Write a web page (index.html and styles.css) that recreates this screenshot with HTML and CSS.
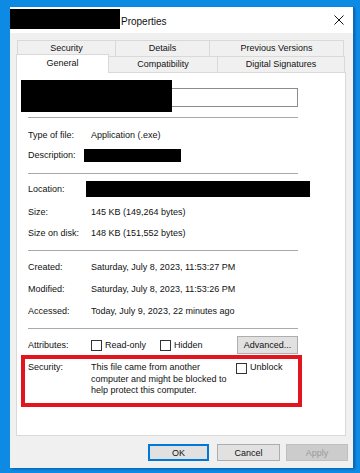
FILE: index.html
```html
<!DOCTYPE html>
<html>
<head>
<meta charset="utf-8">
<link rel="stylesheet" href="styles.css">
</head>
<body>
<div class="window">
  <div class="titlebar">
    <div class="title-redact"></div>
    <span class="title">Properties</span>
    <svg class="close" width="10" height="10" viewBox="0 0 10 10"><path d="M0.5 0.5 L9.5 9.5 M9.5 0.5 L0.5 9.5" stroke="#111" stroke-width="1" fill="none"/></svg>
  </div>
  <div class="content">
    <div class="tabs">
      <div class="tabrow back">
        <div class="tab w-sec">Security</div>
        <div class="tab w-det">Details</div>
        <div class="tab w-prev">Previous Versions</div>
      </div>
      <div class="tabrow front">
        <div class="tab selected w-gen">General</div>
        <div class="tab w-comp">Compatibility</div>
        <div class="tab w-dig">Digital Signatures</div>
      </div>
    </div>
    <div class="panel">
      <div class="icon-row">
        <div class="namebox"></div>
        <div class="icon-redact"></div>
      </div>
      <div class="sep s1"></div>
      <div class="row r-type"><span class="label">Type of file:</span><span class="value">Application (.exe)</span></div>
      <div class="row r-desc"><span class="label">Description:</span><span class="redact desc-redact"></span></div>
      <div class="sep s2"></div>
      <div class="row r-loc"><span class="label">Location:</span><span class="redact loc-redact"></span></div>
      <div class="row r-size"><span class="label">Size:</span><span class="value">145 KB (149,264 bytes)</span></div>
      <div class="row r-disk"><span class="label">Size on disk:</span><span class="value">148 KB (151,552 bytes)</span></div>
      <div class="sep s3"></div>
      <div class="row r-created"><span class="label">Created:</span><span class="value">Saturday, July 8, 2023, 11:53:27 PM</span></div>
      <div class="row r-mod"><span class="label">Modified:</span><span class="value">Saturday, July 8, 2023, 11:53:26 PM</span></div>
      <div class="row r-acc"><span class="label">Accessed:</span><span class="value">Today, July 9, 2023, 22 minutes ago</span></div>
      <div class="sep s4"></div>
      <div class="row r-attr">
        <span class="label">Attributes:</span>
        <span class="check"></span><span class="check-label">Read-only</span>
        <span class="check hidden-box"></span><span class="check-label">Hidden</span>
        <span class="btn advanced">Advanced...</span>
      </div>
      <div class="security-box">
        <span class="label sec-label">Security:</span>
        <span class="sec-text">This file came from another computer and might be blocked to help protect this computer.</span>
        <span class="check unblock-box"></span><span class="check-label unblock-label">Unblock</span>
      </div>
    </div>
    <div class="footer">
      <span class="btn ok">OK</span>
      <span class="btn cancel">Cancel</span>
      <span class="btn apply">Apply</span>
    </div>
  </div>
</div>
</body>
</html>
```
FILE: styles.css
```css
* { box-sizing: border-box; }
html, body { margin: 0; padding: 0; }
body {
  background: #0c8ae4;
  width: 360px;
  height: 473px;
  overflow: hidden;
  font-family: "Liberation Sans", Arial, sans-serif;
  font-size: 9px;
  color: #111;
}
.window {
  margin: 7px 0 0 10px;
  width: 343px;
  height: 461px;
  background: #f0f0f0;
  box-shadow: 1px 0 0 #1565b8, 2px 1px 2px rgba(0,40,100,0.45);
  display: flex;
  flex-direction: column;
}
.titlebar {
  height: 26px;
  background: #fff;
  display: flex;
  align-items: flex-start;
  flex: none;
}
.title-redact {
  width: 110px;
  height: 20px;
  margin-top: 2px;
  background: #000;
}
.title {
  font-size: 10px;
  margin-left: 1px;
  margin-top: 9px;
  line-height: 12px;
  color: #111;
}
.close { margin-left: auto; margin-right: 9px; margin-top: 8px; }
.content {
  padding: 7px 0 0 6px;
  display: flex;
  flex-direction: column;
}
.tabs { width: 329px; }
.tabrow { display: flex; }
.tabrow.back { height: 16px; margin-left: 1px; }
.tabrow.front { height: 16px; }
.tab {
  border: 1px solid #d9d9d9;
  border-right: none;
  background: #f0f0f0;
  text-align: center;
  line-height: 14px;
  white-space: nowrap;
}
.tab:last-child { border-right: 1px solid #d9d9d9; }
.back .tab { border-bottom: none; }
.front .tab { border-bottom: none; }
.w-sec { width: 98px; }
.w-det { width: 94px; }
.w-prev { width: 135px; }
.w-gen { width: 93px; }
.w-comp { width: 108px; }
.w-dig { width: 128px; }
.tab.selected {
  background: #fff;
  height: 19px;
  margin-top: -2px;
  line-height: 16px;
  position: relative;
  z-index: 1;
  border-right: 1px solid #d9d9d9;
}
.tab.selected + .tab { border-left: none; }
.panel {
  width: 330px;
  height: 364px;
  background: #fff;
  border: 1px solid #d9d9d9;
  padding: 0 47px 0 11px;
  display: flex;
  flex-direction: column;
}
.icon-row {
  margin-top: 7px;
  margin-left: -7px;
  height: 32px;
  display: flex;
  flex: none;
}
.icon-redact {
  order: 0;
  width: 152px;
  height: 32px;
  background: #000;
}
.namebox {
  order: 1;
  width: 126px;
  height: 19px;
  margin-top: 8px;
  border: 1px solid #8c8c8c;
  border-left: none;
}
.sep { height: 1px; background: #a9a9a9; flex: none; }
.s1 { margin-top: 5px; }
.s2 { margin-top: 8px; }
.s3 { margin-top: 7px; }
.s4 { margin-top: 7px; }
.row {
  height: 20px;
  display: flex;
  align-items: center;
  flex: none;
  white-space: nowrap;
}
.label { width: 63px; flex: none; }
.r-type { margin-top: 7px; }
.r-loc { margin-top: 5px; }
.r-size { margin-top: 3px; }
.r-disk { margin-top: 1px; }
.r-created { margin-top: 6px; }
.r-mod, .r-acc { margin-top: 2px; }
.r-attr { margin-top: 6px; }
.redact { background: #000; display: block; flex: none; }
.desc-redact { width: 97px; height: 13px; margin-left: -7px; }
.loc-redact { width: 224px; height: 16px; margin-left: -5px; }
.check {
  width: 11px;
  height: 11px;
  border: 1px solid #333;
  background: #fff;
  flex: none;
}
.check-label { margin-left: 3px; }
.hidden-box { margin-left: 14px; }
.btn {
  display: flex;
  align-items: center;
  justify-content: center;
  background: #e1e1e1;
  border: 1px solid #adadad;
  flex: none;
}
.advanced { margin-left: auto; width: 61px; height: 18px; }
.security-box {
  margin: 0 -4px 0 -7px;
  height: 52px;
  border: 4px solid #e3141e;
  padding: 3px 0 0 3px;
  display: flex;
  align-items: flex-start;
  line-height: 11.5px;
  flex: none;
}
.sec-text { width: 142px; flex: none; white-space: normal; }
.unblock-box { margin-left: 3px; margin-top: 1px; }
.footer {
  display: flex;
  justify-content: flex-end;
  padding-right: 0;
  margin-top: 8px;
  width: 332px;
}
.ok { width: 61px; height: 17px; border: 2px solid #0078d7; }
.cancel { width: 63px; height: 17px; margin-left: 8px; }
.apply { width: 62px; height: 17px; margin-left: 6px; background: #cccccc; border-color: #bfbfbf; color: #9a9a9a; }
```
